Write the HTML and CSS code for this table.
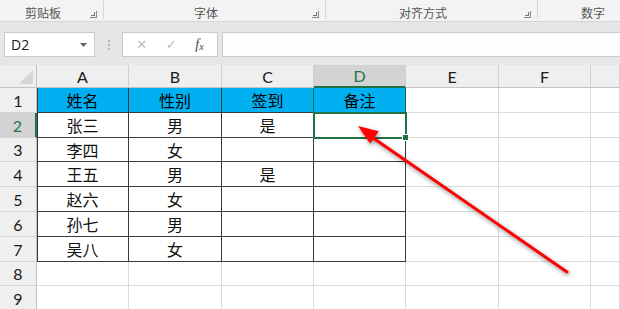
FILE: index.html
```html
<!DOCTYPE html>
<html lang="zh-CN">
<head>
    <meta charset="UTF-8">
    <title>签到表</title>
    <link rel="stylesheet" href="styles.css">
</head>
<body>

<div class="ribbon">
    <div class="group group-clipboard"><span class="group-label">剪贴板</span><i class="launcher"></i></div>
    <div class="group group-font"><span class="group-label">字体</span><i class="launcher"></i></div>
    <div class="group group-align"><span class="group-label">对齐方式</span><i class="launcher"></i></div>
    <div class="group group-number"><span class="group-label">数字</span></div>
</div>

<div class="formula-bar">
    <div class="name-box">
        <span>D2</span>
        <svg class="caret" width="7" height="4" viewBox="0 0 7 4"><path d="M0 0h7L3.5 4z" fill="#666"/></svg>
    </div>
    <div class="grip"><b></b><b></b><b></b></div>
    <div class="fx-buttons">
        <span class="fx-btn">✕</span>
        <span class="fx-btn">✓</span>
        <span class="fx-btn fx"><i>f</i><sub>x</sub></span>
    </div>
    <div class="formula-input"></div>
</div>

<div class="sheet">
    <!-- column headers -->
    <div class="corner"></div>
    <div class="col-head">A</div>
    <div class="col-head">B</div>
    <div class="col-head">C</div>
    <div class="col-head selected">D</div>
    <div class="col-head">E</div>
    <div class="col-head">F</div>
    <div class="col-head"></div>

    <div class="row-head">1</div>
    <div class="cell t head first">姓名</div>
    <div class="cell t head">性别</div>
    <div class="cell t head green-r">签到</div>
    <div class="cell t head green-r">备注</div>
    <div class="cell"></div><div class="cell"></div><div class="cell"></div>

    <div class="row-head selected">2</div>
    <div class="cell t first">张三</div>
    <div class="cell t">男</div>
    <div class="cell t">是</div>
    <div class="cell t active"></div>
    <div class="cell"></div><div class="cell"></div><div class="cell"></div>

    <div class="row-head">3</div>
    <div class="cell t first">李四</div>
    <div class="cell t">女</div>
    <div class="cell t"></div>
    <div class="cell t"></div>
    <div class="cell"></div><div class="cell"></div><div class="cell"></div>

    <div class="row-head">4</div>
    <div class="cell t first">王五</div>
    <div class="cell t">男</div>
    <div class="cell t">是</div>
    <div class="cell t"></div>
    <div class="cell"></div><div class="cell"></div><div class="cell"></div>

    <div class="row-head">5</div>
    <div class="cell t first">赵六</div>
    <div class="cell t">女</div>
    <div class="cell t"></div>
    <div class="cell t"></div>
    <div class="cell"></div><div class="cell"></div><div class="cell"></div>

    <div class="row-head">6</div>
    <div class="cell t first">孙七</div>
    <div class="cell t">男</div>
    <div class="cell t"></div>
    <div class="cell t"></div>
    <div class="cell"></div><div class="cell"></div><div class="cell"></div>

    <div class="row-head">7</div>
    <div class="cell t first">吴八</div>
    <div class="cell t">女</div>
    <div class="cell t"></div>
    <div class="cell t"></div>
    <div class="cell"></div><div class="cell"></div><div class="cell"></div>

    <div class="row-head">8</div>
    <div class="cell"></div><div class="cell"></div><div class="cell"></div><div class="cell"></div>
    <div class="cell"></div><div class="cell"></div><div class="cell"></div>

    <div class="row-head">9</div>
    <div class="cell"></div><div class="cell"></div><div class="cell"></div><div class="cell"></div>
    <div class="cell"></div><div class="cell"></div><div class="cell"></div>
</div>

<!-- callout arrow pointing at the active cell -->
<svg class="callout" width="620" height="309" viewBox="0 0 620 309">
    <line x1="567" y1="272" x2="371" y2="136.5" stroke="#ff0000" stroke-width="3" stroke-linecap="round"/>
    <polygon points="358,126 378.7,131.3 370.1,143.6" fill="#ff0000"/>
</svg>

</body>
</html>
```

FILE: styles.css
```css
:root {
    --chrome-bg: #e6e6e6;
    --ribbon-bg: #f3f3f3;
    --header-bg: #efefef;
    --header-selected-bg: #d3d3d3;
    --grid-line: #dadada;
    --table-line: #3a3a3a;
    --excel-green: #217346;
    --title-blue: #00b0f0;
    --cjk: "Noto Sans CJK SC", "Noto Sans", sans-serif;
}

body {
    margin: 0;
    width: 620px;
    height: 309px;
    overflow: hidden;
    background: var(--chrome-bg);
    font-family: var(--cjk);
}

/* ribbon group captions */
.ribbon {
    display: flex;
    height: 21px;
    background: var(--ribbon-bg);
    border-bottom: 1px solid #d6d6d6;
    overflow: hidden;
}

.group {
    display: flex;
    align-items: center;
    flex-shrink: 0;
    box-sizing: border-box;
    border-right: 1px solid #d6d6d6;
    height: 19px;
}

.group-clipboard { width: 104px; }
.group-font { width: 222px; }
.group-align { width: 212px; }
.group-number { width: 110px; border-right: none; }

.group-label {
    flex: 1;
    text-align: center;
    font-size: 12px;
    color: #555;
    padding-top: 6px;
}

.group-clipboard .group-label,
.group-font .group-label,
.group-align .group-label {
    padding-right: 4px;
}

.launcher {
    width: 6px;
    height: 6px;
    margin: 10px 6px 0 0;
    border-right: 1px solid #888;
    border-bottom: 1px solid #888;
    position: relative;
}

.launcher::after {
    content: "";
    position: absolute;
    right: 1px;
    bottom: 1px;
    width: 3px;
    height: 3px;
    border-right: 1px solid #777;
    border-bottom: 1px solid #777;
}

/* name box + formula input */
.formula-bar {
    display: flex;
    align-items: center;
    height: 43px;
    padding: 0 0 0 4px;
    box-sizing: border-box;
}

.name-box,
.fx-buttons,
.formula-input {
    height: 25px;
    box-sizing: border-box;
    background: #fff;
    border: 1px solid #cbcbcb;
    margin-top: 2px;
}

.name-box {
    width: 91px;
    display: flex;
    align-items: center;
    justify-content: space-between;
    padding: 0 7px 0 6px;
    font-family: "Open Sans", "Liberation Sans", sans-serif;
    font-size: 14px;
    color: #222;
}

.grip {
    width: 27px;
    display: flex;
    flex-direction: column;
    align-items: center;
    gap: 2px;
    margin-top: 2px;
}

.grip b {
    width: 2px;
    height: 2px;
    background: #b5b5b5;
}

.fx-buttons {
    width: 96px;
    display: flex;
    align-items: center;
    justify-content: space-around;
    padding: 0 4px;
}

.fx-btn {
    font-family: "DejaVu Sans", sans-serif;
    font-size: 13px;
    color: #bdbdbd;
}

.fx {
    font-family: "Liberation Serif", serif;
    color: #444;
    font-size: 14px;
}

.fx sub {
    font-size: 10px;
    font-style: italic;
    vertical-align: -1px;
}

.formula-input {
    flex: 1;
    margin-left: 4px;
    border-right: none;
    background: #fdfdfd;
}

/* worksheet grid */
.sheet {
    display: grid;
    grid-template-columns: 37px 92px 93px 92px 92px 93px 92px 1fr;
    grid-template-rows: 23px 25px 25px 24px 25px 25px 25px 25px 24px 25px;
    background: #fff;
}

.corner,
.col-head,
.row-head {
    background: var(--header-bg);
    box-sizing: border-box;
    border-right: 1px solid #d0d0d0;
    border-bottom: 1px solid #c2c2c2;
    font-family: Lato, "Liberation Sans", sans-serif;
    font-size: 16px;
    color: #1a1a1a;
    display: flex;
    align-items: center;
    justify-content: center;
}

.corner {
    position: relative;
    border-right-color: #c2c2c2;
}

.corner::after {
    content: "";
    position: absolute;
    right: 3px;
    bottom: 3px;
    border-style: solid;
    border-width: 0 0 14px 14px;
    border-color: transparent transparent #d6d6d6 transparent;
}

.col-head.selected {
    background: var(--header-selected-bg);
    color: var(--excel-green);
    border-bottom: 2px solid var(--excel-green);
}

.row-head {
    border-right-color: #c2c2c2;
    border-bottom-color: #d6d6d6;
}

.row-head.selected {
    background: var(--header-selected-bg);
    color: var(--excel-green);
    border-right: 2px solid var(--excel-green);
}

.cell {
    box-sizing: border-box;
    border-right: 1px solid var(--grid-line);
    border-bottom: 1px solid var(--grid-line);
    display: flex;
    align-items: center;
    justify-content: center;
    font-size: 16px;
    color: #111;
}

.cell.t {
    border-right-color: var(--table-line);
    border-bottom-color: var(--table-line);
}

.cell.t.first {
    box-shadow: inset 1px 0 0 var(--table-line);
}

.cell.head {
    background: var(--title-blue);
    color: #000;
}

.cell.head.green-r {
    border-right-color: #1f6d43;
}

.cell.active {
    position: relative;
    outline: 2px solid var(--excel-green);
    outline-offset: -1px;
    z-index: 1;
}

.cell.active::after {
    content: "";
    position: absolute;
    right: -4px;
    bottom: -4px;
    width: 5px;
    height: 5px;
    background: var(--excel-green);
    border: 1px solid #fff;
}

.callout {
    position: absolute;
    top: 0;
    left: 0;
    pointer-events: none;
    z-index: 2;
    filter: drop-shadow(1px 2px 2px rgba(0, 0, 0, 0.45));
}
```
